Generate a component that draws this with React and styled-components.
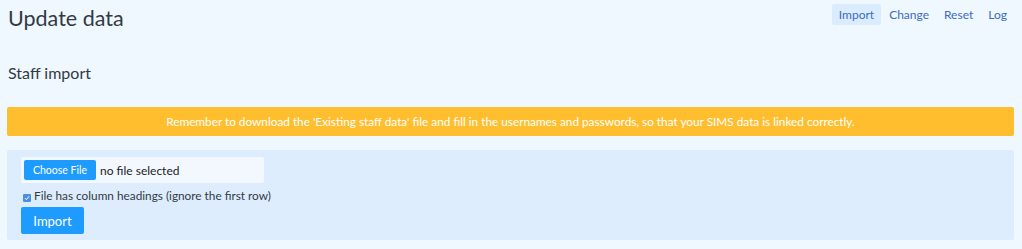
import React from 'react';
import styled, { createGlobalStyle } from 'styled-components';

const GlobalStyle = createGlobalStyle`
  html, body {
    margin: 0;
    padding: 0;
    background: #eff7ff;
    font-family: "Lato", "Open Sans", sans-serif;
    color: #333a44;
  }
`;

const Page = styled.div`
  padding: 0 8px 0 7px;
  min-height: 249px;
  box-sizing: border-box;
`;

const Header = styled.header`
  display: flex;
  justify-content: space-between;
  align-items: flex-start;
  height: 50px;
`;

const Title = styled.h1`
  margin: 5px 0 0 1px;
  font-size: 21.5px;
  font-weight: 400;
  line-height: 26px;
  color: #333a44;
`;

const Nav = styled.nav`
  display: flex;
  gap: 1px;
  margin-top: 4px;
  margin-right: 0;
`;

const NavLink = styled.a`
  padding: 0 7px;
  height: 21px;
  line-height: 21px;
  font-size: 12px;
  color: #3a6cc0;
  text-decoration: none;
  border-radius: 2px;
  background: ${({ $active }) => ($active ? '#dbecfe' : 'transparent')};
`;

const SubTitle = styled.h2`
  margin: 12px 0 0 1px;
  font-size: 16px;
  font-weight: 400;
  line-height: 22px;
  color: #333a44;
`;

const Alert = styled.div`
  margin-top: 23px;
  height: 29px;
  line-height: 29px;
  background: #ffbe2e;
  color: #fff;
  font-size: 11.8px;
  text-align: center;
  border-radius: 2px;
`;

const Panel = styled.form`
  margin-top: 14px;
  background: #ddedfd;
  padding: 7px 14px 7px;
  height: 90px;
  box-sizing: border-box;
  border-radius: 2px;
`;

const FileBox = styled.div`
  display: flex;
  align-items: center;
  gap: 4px;
  width: 243px;
  height: 26px;
  padding: 0 3px;
  box-sizing: border-box;
  background: #f3f8fe;
  border-radius: 2px;
  font-size: 12px;
  color: #222;
`;

const ChooseButton = styled.span`
  display: inline-block;
  width: 72px;
  height: 20px;
  line-height: 20px;
  text-align: center;
  background: #1e9bff;
  color: #fff;
  font-size: 10.5px;
  border-radius: 2px;
`;

const CheckRow = styled.label`
  display: flex;
  align-items: center;
  gap: 3px;
  margin-top: 5px;
  font-size: 11.8px;
  line-height: 16px;
  color: #333a44;
`;

const Check = styled.span`
  display: inline-flex;
  align-items: center;
  justify-content: center;
  width: 8px;
  height: 8px;
  margin: 4px 0 0 2px;
  background: #4a90e2;
  border-radius: 1px;
`;

const SubmitButton = styled.button`
  display: block;
  margin-top: 3px;
  width: 63px;
  height: 27px;
  border: none;
  border-radius: 2px;
  background: #1e9bff;
  color: #fff;
  font-family: inherit;
  font-size: 13px;
  padding: 0;
`;

export default function App() {
  return (
    <>
      <GlobalStyle />
      <Page>
        <Header>
          <Title>Update data</Title>
          <Nav>
            <NavLink $active>Import</NavLink>
            <NavLink>Change</NavLink>
            <NavLink>Reset</NavLink>
            <NavLink>Log</NavLink>
          </Nav>
        </Header>
        <SubTitle>Staff import</SubTitle>
        <Alert>
          Remember to download the 'Existing staff data' file and fill in the usernames and passwords, so that your SIMS data is linked correctly.
        </Alert>
        <Panel>
          <FileBox>
            <ChooseButton>Choose File</ChooseButton>
            <span>no file selected</span>
          </FileBox>
          <CheckRow>
            <Check>
              <svg width="6" height="6" viewBox="0 0 6 6">
                <path d="M1 3.2 L2.4 4.6 L5 1.4" fill="none" stroke="#fff" strokeWidth="1" />
              </svg>
            </Check>
            File has column headings (ignore the first row)
          </CheckRow>
          <SubmitButton type="button">Import</SubmitButton>
        </Panel>
      </Page>
    </>
  );
}
